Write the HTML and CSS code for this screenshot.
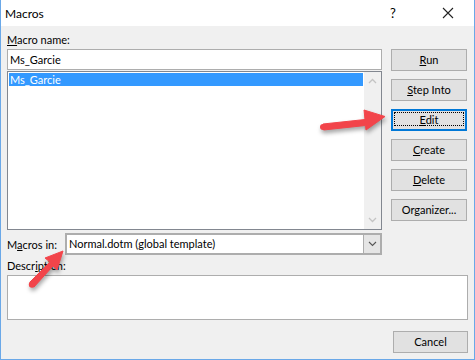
FILE: index.html
```html
<!DOCTYPE html>
<html lang="en">
<head>
    <meta charset="UTF-8">
    <title>Macros</title>
    <link rel="stylesheet" href="styles.css">
</head>
<body>
    <div class="window">
        <!-- Title bar -->
        <div class="titlebar">
            <span class="title">Macros</span>
            <span class="help">?</span>
            <span class="close">
                <svg width="12" height="12" viewBox="0 0 12 12"><path d="M1 1 L11 11 M11 1 L1 11" stroke="#222" stroke-width="1.1" fill="none"/></svg>
            </span>
        </div>

        <div class="content">
            <div class="main">
                <div class="left">
                    <label class="field-label"><u>M</u>acro name:</label>
                    <div class="name-input">Ms_Garcie</div>
                    <div class="listbox">
                        <div class="items">
                            <div class="item selected">Ms_Garcie</div>
                        </div>
                        <div class="scrollbar">
                            <svg width="9" height="6" viewBox="0 0 9 6"><path d="M1 5 L4.5 1.5 L8 5" stroke="#c4c4c4" stroke-width="1.3" fill="none"/></svg>
                            <svg width="9" height="6" viewBox="0 0 9 6"><path d="M1 1 L4.5 4.5 L8 1" stroke="#c4c4c4" stroke-width="1.3" fill="none"/></svg>
                        </div>
                    </div>
                    <div class="macros-in">
                        <label class="inline-label">M<u>a</u>cros in:</label>
                        <div class="combo">
                            <span class="combo-text">Normal.dotm (global template)</span>
                            <span class="combo-btn">
                                <svg width="9" height="6" viewBox="0 0 9 6"><path d="M1 1 L4.5 4.5 L8 1" stroke="#555" stroke-width="1.1" fill="none"/></svg>
                            </span>
                        </div>
                    </div>
                    <label class="field-label desc-label">Descr<u>i</u>ption:</label>
                    <div class="description"></div>
                </div>
                <div class="buttons">
                    <div class="btn"><u>R</u>un</div>
                    <div class="btn"><u>S</u>tep Into</div>
                    <div class="btn focused"><span class="focus-ring"><u>E</u>dit</span></div>
                    <div class="btn"><u>C</u>reate</div>
                    <div class="btn"><u>D</u>elete</div>
                    <div class="btn">Or<u>g</u>anizer...</div>
                </div>
            </div>
            <div class="footer">
                <div class="btn">Cancel</div>
            </div>
        </div>

        <!-- Callout arrows -->
        <svg class="arrow arrow-edit" width="80" height="40" viewBox="0 0 80 40">
            <path d="M6 20 L48 15.5 L47 6 L68 12.5 L49 26 L48.5 21.5 L6.5 26 Z" fill="#f2444a" stroke="#f2444a" stroke-width="1" stroke-linejoin="round"/>
            <circle cx="6" cy="23" r="3" fill="#f2444a"/>
        </svg>
        <svg class="arrow arrow-combo" width="60" height="60" viewBox="0 0 60 60">
            <path d="M7 46 L27 26 L22 22 L40 15 L34 34 L30 30 L11 51 Z" fill="#f2444a" stroke="#f2444a" stroke-width="1" stroke-linejoin="round"/>
            <circle cx="9" cy="48.5" r="3.2" fill="#f2444a"/>
        </svg>
    </div>
</body>
</html>
```

FILE: styles.css
```css
/* Dialog */
body {
    margin: 0;
    font-family: "Lato", "Noto Sans", sans-serif;
    font-size: 11px;
    font-weight: 400;
    color: #000;
    background: #fff;
}

.window {
    position: relative;
    width: 475px;
    height: 360px;
    box-sizing: border-box;
    border: 1px solid #6aa8e8;
    border-top: none;
    background: #f0f0f0;
    overflow: hidden;
}

.titlebar {
    height: 26px;
    background: #fff;
    display: flex;
    align-items: center;
    padding-left: 4px;
}

.title {
    flex: 1;
    font-size: 12px;
}

.help {
    width: 20px;
    text-align: center;
    font-size: 13px;
    margin-right: 36px;
}

.close {
    width: 18px;
    display: flex;
    justify-content: center;
    margin-right: 17px;
}

.content {
    padding: 5px 6px 0 6px;
}

.main {
    display: flex;
    gap: 9px;
}

.left {
    width: 375px;
    display: flex;
    flex-direction: column;
}

.field-label {
    height: 18px;
    line-height: 18px;
}

.name-input {
    height: 19px;
    line-height: 19px;
    background: #fff;
    border: 1px solid #adadad;
    padding-left: 2px;
}

.listbox {
    height: 157px;
    margin-top: 1px;
    background: #fff;
    border: 1px solid #828790;
    display: flex;
}

.items {
    flex: 1;
    padding: 1px 1px 0 1px;
}

.item {
    height: 13px;
    line-height: 13px;
    padding-left: 1px;
}

.item.selected {
    background: #3399ff;
    color: #fff;
}

.scrollbar {
    width: 17px;
    background: #f0f0f0;
    display: flex;
    flex-direction: column;
    justify-content: space-between;
    align-items: center;
    padding: 6px 0 6px;
}

.macros-in {
    display: flex;
    align-items: center;
    margin-top: 3px;
}

.inline-label {
    width: 58px;
}

.combo {
    flex: 1;
    height: 18px;
    display: flex;
    background: #fff;
    border: 2px solid #adadad;
}

.combo-text {
    flex: 1;
    line-height: 18px;
    padding-left: 2px;
}

.combo-btn {
    width: 16px;
    background: #e5e5e5;
    border-left: 1px solid #adadad;
    display: flex;
    align-items: center;
    justify-content: center;
}

.desc-label {
    margin-top: 2px;
}

.description {
    width: 459px;
    height: 43px;
    background: #fff;
    border: 1px solid #adadad;
}

.buttons {
    margin-top: 18px;
    display: flex;
    flex-direction: column;
    gap: 8px;
}

.btn {
    box-sizing: border-box;
    width: 76px;
    height: 22px;
    line-height: 20px;
    text-align: center;
    background: #e1e1e1;
    border: 1px solid #adadad;
    font-size: 11px;
}

.btn.focused {
    border: 2px solid #0078d7;
    padding: 1px;
    line-height: 14px;
}

.focus-ring {
    display: block;
    height: 14px;
    border: 1px dotted #000;
    line-height: 13px;
    box-sizing: border-box;
}

.footer {
    display: flex;
    justify-content: flex-end;
    margin-top: 11px;
}

.footer .btn {
    width: 75px;
}

.arrow {
    position: absolute;
    filter: drop-shadow(1px 3px 2px rgba(0, 0, 0, 0.35));
}

.arrow-edit {
    left: 316px;
    top: 104px;
}

.arrow-combo {
    left: 22px;
    top: 236px;
}
```
